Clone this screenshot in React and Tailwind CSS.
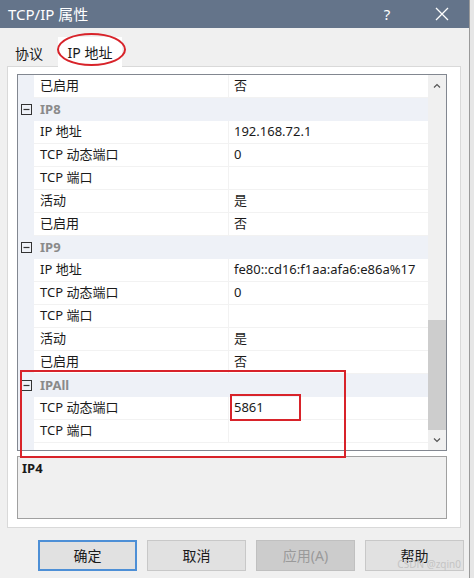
import React from "react";

const rows = [
  { name: "已启用", value: "否" },
  { cat: "IP8" },
  { name: "IP 地址", value: "192.168.72.1" },
  { name: "TCP 动态端口", value: "0" },
  { name: "TCP 端口", value: "" },
  { name: "活动", value: "是" },
  { name: "已启用", value: "否" },
  { cat: "IP9" },
  { name: "IP 地址", value: "fe80::cd16:f1aa:afa6:e86a%17" },
  { name: "TCP 动态端口", value: "0" },
  { name: "TCP 端口", value: "" },
  { name: "活动", value: "是" },
  { name: "已启用", value: "否" },
  { cat: "IPAll" },
  { name: "TCP 动态端口", value: "5861" },
  { name: "TCP 端口", value: "" },
];

const Minus = () => (
  <svg width="11" height="11" viewBox="0 0 11 11">
    <rect x="0.5" y="0.5" width="10" height="10" fill="none" stroke="#333" />
    <path d="M2.5 5.5h6" stroke="#333" strokeWidth="1.2" />
  </svg>
);

const App = () => {
  return (
    <div className="w-[474px] h-[578px] bg-[#e6e6e6] font-['Noto_Sans','Noto_Sans_CJK_SC',sans-serif] text-[13px] text-[#1a1a1a] overflow-hidden">
      <div className="relative w-[470px] h-[578px] bg-[#f0f0f0] border-r border-[#9a9a9a] flex flex-col">
        {/* title bar */}
        <div className="h-[28px] bg-[#64748a] flex items-center pl-[8px] text-white text-[15px] shrink-0">
          <span className="flex-1">TCP/IP 属性</span>
          <span className="w-[30px] text-center text-[15px] mr-[33px]">?</span>
          <svg width="14" height="14" viewBox="0 0 14 14" className="mr-[20px]">
            <path d="M1 1L13 13M13 1L1 13" stroke="#fff" strokeWidth="1.3" />
          </svg>
        </div>

        {/* tabs */}
        <div className="h-[38px] flex items-end pl-[8px] shrink-0">
          <div className="h-[26px] px-[7px] flex items-center text-[14px]">协议</div>
          <div className="h-[30px] w-[64px] bg-white flex items-center justify-center text-[14px] ml-[8px] -mb-px relative z-10">
            IP 地址
          </div>
        </div>

        {/* panel */}
        <div className="ml-[7px] w-[454px] h-[462px] bg-white border border-[#d9d9d9] pt-[7px] pl-[9px]">
          {/* property grid */}
          <div className="w-[430px] h-[377px] border border-[#828790] flex">
            <div className="flex-1 flex flex-col">
              {rows.map((r, i) =>
                r.cat ? (
                  <div key={i} className="h-[23px] flex items-center bg-[#eef1f7]">
                    <div className="w-[16px] flex justify-center">
                      <Minus />
                    </div>
                    <span className="pl-[6px] font-bold text-[#8a8a8a]">{r.cat}</span>
                  </div>
                ) : (
                  <div key={i} className="h-[23px] flex">
                    <div className="w-[16px] bg-[#eef1f7]" />
                    <div className="w-[195px] pl-[6px] flex items-center border-b border-[#f2f2f2] border-r">
                      {r.name}
                    </div>
                    <div className="flex-1 pl-[5px] flex items-center border-b border-[#f2f2f2]">
                      {r.value}
                    </div>
                  </div>
                )
              )}
              <div className="flex-1 flex">
                <div className="w-[16px] bg-[#eef1f7]" />
              </div>
            </div>
            {/* scrollbar */}
            <div className="w-[18px] bg-[#f0f0f0] flex flex-col">
              <div className="h-[20px] flex items-center justify-center">
                <svg width="8" height="5" viewBox="0 0 8 5">
                  <path d="M1 4.5L4 1.5L7 4.5" fill="none" stroke="#555" strokeWidth="1.2" />
                </svg>
              </div>
              <div className="flex-1" />
              <div className="h-[110px] bg-[#cdcdcd]" />
              <div className="h-[20px] flex items-center justify-center">
                <svg width="8" height="5" viewBox="0 0 8 5">
                  <path d="M1 0.5L4 3.5L7 0.5" fill="none" stroke="#555" strokeWidth="1.2" />
                </svg>
              </div>
            </div>
          </div>

          {/* description */}
          <div className="mt-[5px] w-[430px] h-[63px] bg-[#f0f0f0] border border-[#a0a0a0] px-[4px] pt-[2px] font-bold">
            IP4
          </div>
        </div>

        {/* buttons */}
        <div className="flex gap-[10px] pl-[38px] mt-[12px]">
          <div className="w-[99px] h-[31px] bg-[#e1e1e1] border-2 border-[#4d8fd6] flex items-center justify-center text-[14px]">
            确定
          </div>
          <div className="w-[99px] h-[31px] bg-[#e1e1e1] border border-[#c8c8c8] flex items-center justify-center text-[14px]">
            取消
          </div>
          <div className="w-[99px] h-[31px] bg-[#cccccc] border border-[#c0c0c0] flex items-center justify-center text-[14px] text-[#9a9a9a]">
            应用(A)
          </div>
          <div className="relative w-[99px] h-[31px] bg-[#e1e1e1] border border-[#c8c8c8] flex items-center justify-center text-[14px]">
            帮助
            <span className="absolute right-[2px] bottom-[1px] text-[10px] text-[#c4c4c4] leading-none">
              CSDN @zqin0
            </span>
          </div>
        </div>

        {/* annotations */}
        <div className="absolute left-[57px] top-[33px] w-[69px] h-[33px] border-2 border-[#d8232a] rounded-[50%] z-20" />
        <div className="absolute left-[20px] top-[370px] w-[326px] h-[88px] border-2 border-[#d8232a] z-20" />
        <div className="absolute left-[230px] top-[394px] w-[71px] h-[27px] border-2 border-[#d8232a] z-20" />
      </div>
    </div>
  );
};

export default App;
